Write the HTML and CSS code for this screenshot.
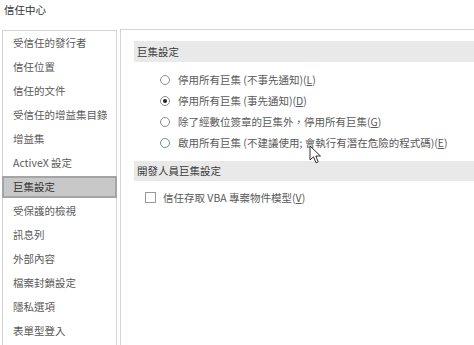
FILE: index.html
```html
<!DOCTYPE html>
<html lang="zh-Hant">
<head>
<meta charset="utf-8">
<title>信任中心</title>
<link rel="stylesheet" href="styles.css">
</head>
<body>
<div class="title">信任中心</div>
<div class="main">
  <ul class="nav">
    <li class="nav-item">受信任的發行者</li>
    <li class="nav-item">信任位置</li>
    <li class="nav-item">信任的文件</li>
    <li class="nav-item">受信任的增益集目錄</li>
    <li class="nav-item">增益集</li>
    <li class="nav-item">ActiveX 設定</li>
    <li class="nav-item sel">巨集設定</li>
    <li class="nav-item">受保護的檢視</li>
    <li class="nav-item">訊息列</li>
    <li class="nav-item">外部內容</li>
    <li class="nav-item">檔案封鎖設定</li>
    <li class="nav-item">隱私選項</li>
    <li class="nav-item">表單型登入</li>
  </ul>
  <div class="content">
    <div class="section-head">巨集設定</div>
    <div class="options">
      <div class="opt"><span class="radio"></span><span>停用所有巨集 (不事先通知)(<u>L</u>)</span></div>
      <div class="opt"><span class="radio checked"></span><span>停用所有巨集 (事先通知)(<u>D</u>)</span></div>
      <div class="opt"><span class="radio"></span><span>除了經數位簽章的巨集外，停用所有巨集(<u>G</u>)</span></div>
      <div class="opt"><span class="radio hover"></span><span>啟用所有巨集 (不建議使用; 會執行有潛在危險的程式碼)(<u>E</u>)</span></div>
    </div>
    <div class="section-head second">開發人員巨集設定</div>
    <div class="check-row"><span class="checkbox"></span><span>信任存取 VBA 專案物件模型(<u>V</u>)</span></div>
  </div>
</div>
<svg class="cursor" width="13" height="20" viewBox="0 0 13 20">
  <path d="M1 1 L1 15 L4.5 11.8 L7 17.8 L9.2 16.9 L6.8 11 L11.5 11 Z" fill="#fff" stroke="#333" stroke-width="1" stroke-linejoin="round"/>
</svg>
</body>
</html>
```
FILE: styles.css
```css
html, body {
  margin: 0;
  padding: 0;
  background: #fff;
  overflow: hidden;
}
body {
  width: 474px;
  height: 345px;
  position: relative;
  font-family: "Noto Sans CJK TC", "Noto Sans", sans-serif;
  font-size: 10.5px;
  color: #5a5a5a;
}
.title {
  height: 29px;
  line-height: 20px;
  padding-left: 4px;
  color: #333;
}
.main {
  display: flex;
  gap: 3px;
  margin-left: 2px;
  margin-right: -20px;
  height: 316px;
}
.nav {
  list-style: none;
  margin: 1px 0 0 0;
  padding: 1px 0 0 0;
  width: 115px;
  box-sizing: border-box;
  border: 1px solid #d4d4d4;
  border-bottom: none;
}
.nav-item {
  height: 22px;
  line-height: 22px;
  margin-bottom: 2px;
  padding-left: 10px;
  white-space: nowrap;
}
.nav-item.sel {
  box-sizing: border-box;
  margin-left: -1px;
  margin-right: -1px;
  padding-left: 9px;
  line-height: 18px;
  background: #c8c8c8;
  border: 2px solid #a4a4a4;
  color: #333;
}
.content {
  flex: 1;
  border: 1px solid #d4d4d4;
  border-bottom: none;
  padding: 11px 0 0 13px;
}
.section-head {
  height: 21px;
  line-height: 21px;
  padding-left: 3px;
  background: #e9e9e9;
  color: #3a3a3a;
}
.section-head.second {
  margin-top: 8px;
  height: 20px;
  line-height: 20px;
}
.options {
  margin-top: 7px;
  padding-left: 26px;
}
.opt {
  height: 21px;
  display: flex;
  align-items: center;
  gap: 8px;
  white-space: nowrap;
}
.radio {
  width: 10px;
  height: 10px;
  box-sizing: border-box;
  border: 1px solid #8c8c8c;
  border-radius: 50%;
  display: flex;
  align-items: center;
  justify-content: center;
  flex-shrink: 0;
}
.radio.checked::after {
  content: "";
  width: 4px;
  height: 4px;
  border-radius: 50%;
  background: #222;
}
.radio.hover {
  border: 1.5px solid #5e9a88;
}
.check-row {
  margin-top: 6px;
  height: 21px;
  padding-left: 11px;
  display: flex;
  align-items: center;
  gap: 7px;
  white-space: nowrap;
}
.checkbox {
  width: 11px;
  height: 11px;
  box-sizing: border-box;
  border: 1px solid #9a9a9a;
  flex-shrink: 0;
}
.cursor {
  position: absolute;
  left: 309px;
  top: 145px;
}
```
